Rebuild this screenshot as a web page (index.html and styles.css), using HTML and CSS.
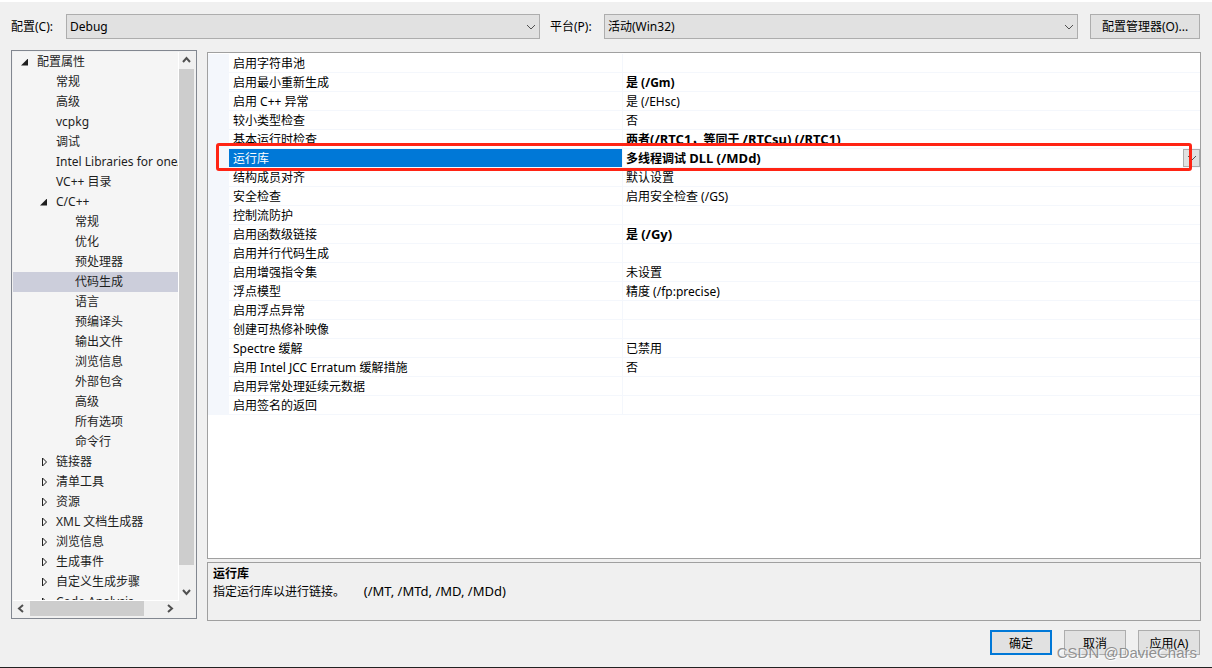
FILE: index.html
```html
<!DOCTYPE html>
<html lang="zh-CN">
<head>
    <meta charset="UTF-8">
    <title>属性页</title>
    <link rel="stylesheet" href="styles.css">
</head>
<body>

    <div class="dialog">
        <div class="toolbar">
            <label class="config-label" for="config">配置(C):</label>
            <div class="combo">
                <select id="config">
                    <option>Debug</option>
                    <option>Release</option>
                </select>
                <svg class="combo-arrow" width="10" height="6" viewBox="0 0 10 6"><path d="M1 1l4 4 4-4"/></svg>
            </div>
            <label class="platform-label" for="platform">平台(P):</label>
            <div class="combo">
                <select id="platform">
                    <option>活动(Win32)</option>
                    <option>x64</option>
                </select>
                <svg class="combo-arrow" width="10" height="6" viewBox="0 0 10 6"><path d="M1 1l4 4 4-4"/></svg>
            </div>
            <button class="btn manager">配置管理器(O)...</button>
        </div>

        <div class="main">
            <!-- left tree -->
            <div class="tree">
                <div class="tree-view">
                    <ul class="tree-list">
                        <li class="open">配置属性</li>
                        <li class="level1">常规</li>
                        <li class="level1">高级</li>
                        <li class="level1">vcpkg</li>
                        <li class="level1">调试</li>
                        <li class="level1">Intel Libraries for oneAPI</li>
                        <li class="level1">VC++ 目录</li>
                        <li class="level1 open">C/C++</li>
                        <li class="level2">常规</li>
                        <li class="level2">优化</li>
                        <li class="level2">预处理器</li>
                        <li class="level2 selected">代码生成</li>
                        <li class="level2">语言</li>
                        <li class="level2">预编译头</li>
                        <li class="level2">输出文件</li>
                        <li class="level2">浏览信息</li>
                        <li class="level2">外部包含</li>
                        <li class="level2">高级</li>
                        <li class="level2">所有选项</li>
                        <li class="level2">命令行</li>
                        <li class="level1 closed">链接器</li>
                        <li class="level1 closed">清单工具</li>
                        <li class="level1 closed">资源</li>
                        <li class="level1 closed">XML 文档生成器</li>
                        <li class="level1 closed">浏览信息</li>
                        <li class="level1 closed">生成事件</li>
                        <li class="level1 closed">自定义生成步骤</li>
                        <li class="level1 closed">Code Analysis</li>
                    </ul>
                </div>
                <div class="vscroll">
                    <svg width="15" height="17" viewBox="0 0 15 17"><path d="M4 10l3.500-4 3.500 4"/></svg>
                    <div class="vthumb"></div>
                    <svg width="15" height="17" viewBox="0 0 15 17"><path d="M4 6l3.500 4 3.500-4"/></svg>
                </div>
                <div class="hscroll">
                    <svg width="17" height="16" viewBox="0 0 17 16"><path d="M10 4L6 7.500l4 3.500"/></svg>
                    <div class="hthumb"></div>
                    <svg width="17" height="16" viewBox="0 0 17 16"><path d="M6 4l4 3.500-4 3.500"/></svg>
                </div>
            </div>

            <!-- right side -->
            <div class="content">
                <div class="grid">
                    <table>
                        <tr><td class="gutter"></td><td class="name">启用字符串池</td><td></td></tr>
                        <tr><td class="gutter"></td><td class="name">启用最小重新生成</td><td class="changed">是 (/Gm)</td></tr>
                        <tr><td class="gutter"></td><td class="name">启用 C++ 异常</td><td>是 (/EHsc)</td></tr>
                        <tr><td class="gutter"></td><td class="name">较小类型检查</td><td>否</td></tr>
                        <tr><td class="gutter"></td><td class="name">基本运行时检查</td><td class="changed">两者<span class="flags">(/RTC1</span>，等同于 <span class="flags">/RTCsu) (/RTC1)</span></td></tr>
                        <tr class="current">
                            <td class="gutter"></td>
                            <td class="name">运行库</td>
                            <td class="changed">
                                <div class="value">
                                    <span>多线程调试 <span class="flags">DLL (/MDd)</span></span>
                                    <button class="drop" aria-label="展开"><svg width="10" height="6" viewBox="0 0 10 6"><path d="M1 1l4 4 4-4"/></svg></button>
                                </div>
                            </td>
                        </tr>
                        <tr><td class="gutter"></td><td class="name">结构成员对齐</td><td>默认设置</td></tr>
                        <tr><td class="gutter"></td><td class="name">安全检查</td><td>启用安全检查 (/GS)</td></tr>
                        <tr><td class="gutter"></td><td class="name">控制流防护</td><td></td></tr>
                        <tr><td class="gutter"></td><td class="name">启用函数级链接</td><td class="changed">是 <span class="flags">(/Gy)</span></td></tr>
                        <tr><td class="gutter"></td><td class="name">启用并行代码生成</td><td></td></tr>
                        <tr><td class="gutter"></td><td class="name">启用增强指令集</td><td>未设置</td></tr>
                        <tr><td class="gutter"></td><td class="name">浮点模型</td><td>精度 (/fp:precise)</td></tr>
                        <tr><td class="gutter"></td><td class="name">启用浮点异常</td><td></td></tr>
                        <tr><td class="gutter"></td><td class="name">创建可热修补映像</td><td></td></tr>
                        <tr><td class="gutter"></td><td class="name">Spectre 缓解</td><td>已禁用</td></tr>
                        <tr><td class="gutter"></td><td class="name">启用 Intel JCC Erratum 缓解措施</td><td>否</td></tr>
                        <tr><td class="gutter"></td><td class="name">启用异常处理延续元数据</td><td></td></tr>
                        <tr><td class="gutter"></td><td class="name">启用签名的返回</td><td></td></tr>
                    </table>
                    <div class="mark"></div>
                </div>
                <div class="description">
                    <h2>运行库</h2>
                    <p>指定运行库以进行链接。      <span class="flags">(/MT, /MTd, /MD, /MDd)</span></p>
                </div>
            </div>
        </div>

        <div class="buttons">
            <button class="btn ok">确定</button>
            <button class="btn">取消</button>
            <button class="btn">应用(A)</button>
        </div>
        <div class="watermark">CSDN @DavieChars</div>
    </div>

</body>
</html>
```
FILE: styles.css
```css
* {
    box-sizing: border-box;
}

body {
    margin: 0;
    background-color: #fff;
    font-family: "Noto Sans", "Noto Sans CJK SC", sans-serif;
    font-size: 12px;
    color: #000;
}

button, select {
    font: inherit;
    color: inherit;
}

svg {
    display: block;
    flex: none;
    fill: none;
    stroke: #505050;
}

.dialog {
    position: relative;
    display: flex;
    flex-direction: column;
    height: 100vh;
    padding: 11px 11px 12px;
    border-top: 2px solid #fff;
    border-bottom: 1px solid #222;
    background-color: #f0f0f0;
}

/* top row */
.toolbar {
    display: flex;
    align-items: center;
    height: 26px;
    padding-right: 1px;
}

.config-label {
    width: 55px;
}

.platform-label {
    width: 64px;
    padding-left: 10px;
}

.combo {
    position: relative;
    flex: 1;
}

.combo select {
    display: block;
    width: 100%;
    height: 25px;
    padding: 0 3px;
    border: 1px solid #adadad;
    border-radius: 0;
    background-color: #e1e1e1;
    appearance: none;
}

.combo-arrow {
    position: absolute;
    top: 10px;
    right: 4px;
}

.btn {
    width: 62px;
    height: 25px;
    padding: 0;
    border: 1px solid #adadad;
    background-color: #e1e1e1;
}

.manager {
    width: 110px;
    margin-left: 12px;
}

.ok {
    border: 2px solid #0078d7;
}

.main {
    display: flex;
    flex: 1;
    gap: 10px;
    min-height: 0;
    padding-top: 11px;
}

/* tree */
.tree {
    display: grid;
    grid-template-columns: 1fr 16px;
    grid-template-rows: 1fr 16px;
    width: 186px;
    margin-bottom: 2px;
    padding: 1px;
    border: 1px solid #828790;
    background-color: #f0f0f0;
}

.tree-view {
    overflow: hidden;
    min-height: 0;
    border-right: 1px solid #fff;
    border-bottom: 1px solid #fff;
    background-color: #f5f5f5;
}

.tree-list {
    margin: 0;
    padding: 0;
    list-style: none;
}

.tree-list li {
    display: flex;
    align-items: center;
    height: 20px;
    padding-bottom: 2px;
    padding-left: 24px;
    color: #1e1e1e;
    white-space: nowrap;
}

.tree-list .level1 {
    padding-left: 43px;
}

.tree-list .level2 {
    padding-left: 62px;
}

.tree-list .selected {
    background-color: #cccedb;
}

.open::before,
.closed::before {
    content: "";
    width: 7px;
    height: 7px;
    margin-top: 2px;
    margin-left: -16px;
    margin-right: 9px;
}

.open::before {
    background-color: #1e1e1e;
    clip-path: polygon(100% 0, 100% 100%, 0 100%);
}

.closed::before {
    height: 10px;
    margin-left: -14px;
    margin-right: 7px;
    background: url("data:image/svg+xml,%3Csvg xmlns='http://www.w3.org/2000/svg' width='7' height='10'%3E%3Cpath d='M.5 1v8l4-4z' fill='none' stroke='%231e1e1e'/%3E%3C/svg%3E") no-repeat;
}

.vscroll {
    display: flex;
    flex-direction: column;
}

.vthumb {
    flex: 1;
    width: 15px;
    margin-bottom: 19px;
    background-color: #cdcdcd;
}

.hscroll {
    display: flex;
}

.hthumb {
    flex: 1;
    height: 15px;
    margin-right: 18px;
    background-color: #cdcdcd;
}

.vscroll svg,
.hscroll svg {
    stroke-width: 2;
}

/* property grid */
.content {
    display: flex;
    flex: 1;
    flex-direction: column;
    gap: 3px;
    padding-top: 2px;
}

.grid {
    position: relative;
    flex: 1;
    min-height: 0;
    padding-top: 1px;
    border: 1px solid #a0a0a0;
    background-color: #fff;
}

table {
    width: 100%;
    table-layout: fixed;
    border-collapse: separate;
    border-spacing: 0;
}

td {
    height: 19px;
    padding: 2px 0 0 3px;
    border-bottom: 1px solid #f4f7fc;
    line-height: 16px;
    white-space: nowrap;
}

.gutter {
    width: 21px;
    background-color: #f4f7fc;
}

.name {
    width: 394px;
    padding-left: 4px;
    border-right: 1px solid #f4f7fc;
}

.changed {
    font-weight: bold;
}

.flags {
    font-size: 13px;
    line-height: 1;
}

.current .name {
    background-color: #0078d7;
    background-clip: padding-box;
    color: #fff;
}

.value {
    display: flex;
    justify-content: space-between;
    height: 16px;
}

.drop {
    display: flex;
    align-items: center;
    justify-content: center;
    width: 17px;
    height: 18px;
    margin-top: -2px;
    padding: 0;
    border: 1px solid #adadad;
    background-color: #e1e1e1;
}

/* red frame round the current row */
.mark {
    position: absolute;
    top: 90px;
    left: 8px;
    right: 8px;
    height: 28px;
    border: 3px solid #ff2414;
    border-radius: 3px;
    pointer-events: none;
}

.description {
    height: 59px;
    padding: 2px 5px;
    border: 1px solid #a0a0a0;
    line-height: 18px;
}

.description h2 {
    margin: 0;
    font-size: 12px;
}

.description p {
    margin: 0;
    white-space: pre;
}

.buttons {
    display: flex;
    justify-content: flex-end;
    gap: 12px;
    padding-top: 9px;
    padding-right: 1px;
}

.watermark {
    position: absolute;
    right: 15px;
    bottom: 4px;
    font-family: "Liberation Sans", sans-serif;
    font-size: 15px;
    line-height: 20px;
    color: rgba(120, 120, 120, 0.8);
    text-shadow: 1px 1px 1px #fff;
    pointer-events: none;
}
```
